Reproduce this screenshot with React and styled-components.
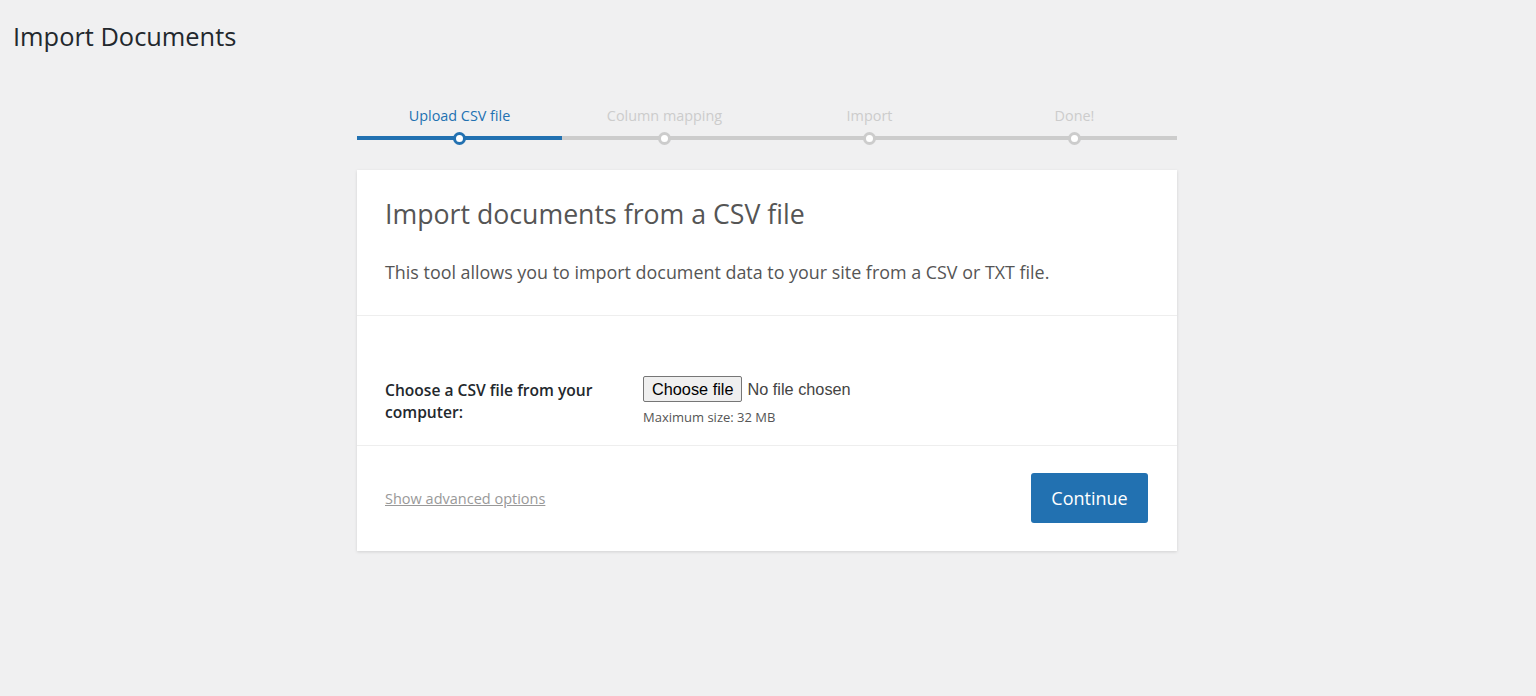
import React from "react";
import styled, { createGlobalStyle } from "styled-components";

const GlobalStyle = createGlobalStyle`
  html, body {
    margin: 0;
    padding: 0;
    background: #f0f0f1;
    font-family: "Open Sans", "Noto Sans", sans-serif;
    color: #3c434a;
  }
`;

const Page = styled.div`
  min-height: 696px;
  padding: 18px 13px 0;
  box-sizing: border-box;
`;

const PageTitle = styled.h1`
  margin: 0;
  font-size: 25.4px;
  font-weight: 400;
  color: #23282d;
  line-height: 36px;
`;

const Wrap = styled.div`
  width: 820px;
  margin: 52px auto 0;
  position: relative;
  left: -1px;
`;

const Steps = styled.ol`
  display: grid;
  grid-template-columns: repeat(4, 1fr);
  margin: 0;
  padding: 0;
  list-style: none;
`;

const Step = styled.li`
  position: relative;
  text-align: center;
  font-size: 14.4px;
  line-height: 20px;
  color: ${(p) => (p.$active ? "#2271b1" : "#ccc")};
  padding-bottom: 10px;
  border-bottom: 4px solid ${(p) => (p.$active ? "#2271b1" : "#ccc")};

  &::after {
    content: "";
    position: absolute;
    left: 50%;
    bottom: -8.5px;
    width: 7px;
    height: 7px;
    margin-left: -7px;
    border-radius: 50%;
    background: #fff;
    border: 3px solid ${(p) => (p.$active ? "#2271b1" : "#ccc")};
  }
`;

const Card = styled.div`
  margin-top: 30px;
  background: #fff;
  box-shadow: 0 1px 3px rgba(0, 0, 0, 0.13);
`;

const Header = styled.header`
  padding: 27px 28px 30px;
  border-bottom: 1px solid #eee;
`;

const Heading = styled.h2`
  margin: 0 0 28px;
  font-size: 26.7px;
  font-weight: 400;
  line-height: 34px;
  color: #555;
`;

const Intro = styled.p`
  margin: 0;
  font-size: 17.9px;
  line-height: 26px;
  color: #555;
`;

const FormSection = styled.section`
  display: grid;
  grid-template-columns: 258px 1fr;
  padding: 60px 28px 19px;
  border-bottom: 1px solid #eee;
`;

const FieldLabel = styled.label`
  font-size: 15.6px;
  font-weight: 600;
  line-height: 22px;
  color: #23282d;
  padding-top: 3px;
`;

const FileRow = styled.div`
  display: flex;
  align-items: center;
  gap: 5px;
`;

const FileButton = styled.button`
  font-family: "Liberation Sans", Arial, sans-serif;
  font-size: 16.3px;
  height: 26px;
  padding: 0 8px;
  color: #000;
  background: #efefef;
  border: 1px solid #767676;
  border-radius: 2px;
`;

const FileStatus = styled.span`
  font-family: "Liberation Sans", Arial, sans-serif;
  font-size: 16.3px;
  color: #444;
`;

const Hint = styled.small`
  display: block;
  margin-top: 6px;
  font-size: 13px;
  line-height: 18px;
  color: #555;
`;

const Footer = styled.footer`
  display: flex;
  align-items: center;
  justify-content: space-between;
  padding: 27px 29px 28px 28px;
`;

const AdvancedLink = styled.a`
  font-size: 14.5px;
  color: #999;
  text-decoration: underline;
  cursor: pointer;
`;

const ContinueButton = styled.button`
  font-family: inherit;
  font-size: 18px;
  color: #fff;
  background: #2271b1;
  border: none;
  border-radius: 3px;
  width: 117px;
  height: 50px;
  cursor: pointer;
`;

const steps = ["Upload CSV file", "Column mapping", "Import", "Done!"];

export default function App() {
  return (
    <Page>
      <GlobalStyle />
      <PageTitle>Import Documents</PageTitle>
      <Wrap>
        <Steps>
          {steps.map((s, i) => (
            <Step key={s} $active={i === 0}>
              {s}
            </Step>
          ))}
        </Steps>
        <Card>
          <Header>
            <Heading>Import documents from a CSV file</Heading>
            <Intro>
              This tool allows you to import document data to your site from a
              CSV or TXT file.
            </Intro>
          </Header>
          <FormSection>
            <FieldLabel>Choose a CSV file from your computer:</FieldLabel>
            <div>
              <FileRow>
                <FileButton>Choose file</FileButton>
                <FileStatus>No file chosen</FileStatus>
              </FileRow>
              <Hint>Maximum size: 32 MB</Hint>
            </div>
          </FormSection>
          <Footer>
            <AdvancedLink>Show advanced options</AdvancedLink>
            <ContinueButton>Continue</ContinueButton>
          </Footer>
        </Card>
      </Wrap>
    </Page>
  );
}
